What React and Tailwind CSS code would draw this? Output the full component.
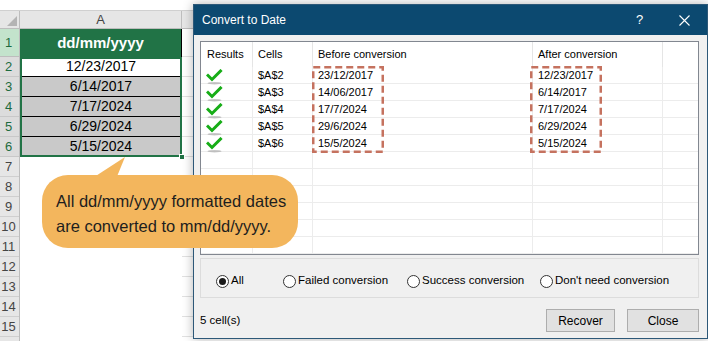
import clsx from "clsx";

const DATES = ["12/23/2017", "6/14/2017", "7/17/2024", "6/29/2024", "5/15/2024"];

const RESULTS = [
  { cell: "$A$2", before: "23/12/2017", after: "12/23/2017" },
  { cell: "$A$3", before: "14/06/2017", after: "6/14/2017" },
  { cell: "$A$4", before: "17/7/2024", after: "7/17/2024" },
  { cell: "$A$5", before: "29/6/2024", after: "6/29/2024" },
  { cell: "$A$6", before: "15/5/2024", after: "5/15/2024" },
];

// Row 16 only peeks in at the very bottom edge, so it gets no label.
const EMPTY_SHEET_ROWS = [7, 8, 9, 10, 11, 12, 13, 14, 15, 16];

const CheckMark = () => (
  <svg width="17" height="16" viewBox="0 0 17 16" className="shrink-0">
    <ellipse cx="8.5" cy="14.2" rx="7" ry="1.3" fill="#9a9a9a" opacity="0.55" />
    <polyline
      points="2,6.5 6,10.5 14.5,2"
      fill="none"
      stroke="#17ad17"
      strokeWidth="3"
      strokeLinecap="square"
    />
  </svg>
);

const CornerTriangle = () => (
  <svg width="10" height="10" viewBox="0 0 10 10" className="absolute bottom-[2px] right-[2px]">
    <polygon points="10,0 10,10 0,10" fill="#b4b4b4" />
  </svg>
);

const Sheet = () => (
  <div className="flex h-full flex-col bg-white font-['Liberation_Sans',Arial,sans-serif]">
    <div className="h-[11px] shrink-0 border-b border-[#d0d0d0] bg-white" />
    <div className="flex flex-1">
      {/* row numbers */}
      <div className="flex w-[20px] shrink-0 flex-col border-r border-[#bdbdbd] bg-[#e6e6e6] text-[13px]">
        <div className="relative h-[18px] border-b border-[#bdbdbd]">
          <CornerTriangle />
        </div>
        <div className="flex h-[28px] items-center justify-center border-b border-[#bdbdbd] bg-[#c3e3cc] pr-[2px] text-[#1d6b40]">
          1
        </div>
        {[2, 3, 4, 5, 6].map((n) => (
          <div
            key={n}
            className="flex h-[20px] items-center justify-center border-b border-[#c8c8c8] bg-[#dcdcdc] pr-[2px] text-[#1d6b40]"
          >
            {n}
          </div>
        ))}
        {EMPTY_SHEET_ROWS.map((n) => (
          <div
            key={n}
            className="flex h-[20px] items-center justify-center border-b border-[#cfcfcf] pr-[2px] text-[#444]"
          >
            {n < 16 ? n : null}
          </div>
        ))}
      </div>

      {/* column A */}
      <div className="flex w-[162px] shrink-0 flex-col">
        <div className="flex h-[18px] items-center justify-center border-b border-r border-[#bdbdbd] bg-[#e6e6e6] text-[13px] text-[#444]">
          A
        </div>
        <div className="flex h-[28px] items-center justify-center border-r border-black bg-[#217346] text-[15px] font-bold text-white">
          dd/mm/yyyy
        </div>
        <div className="relative">
          {DATES.map((d, i) => (
            <div
              key={d}
              className={clsx(
                "flex h-[20px] items-center justify-center border-b border-black text-[14px] text-black",
                i === 0 ? "bg-white" : "bg-[#c9c9c9]"
              )}
            >
              {d}
            </div>
          ))}
          {/* selection outline with fill handle */}
          <div className="pointer-events-none absolute inset-0 border-2 border-[#217346]" />
          <div className="absolute -bottom-[3px] -right-[3px] h-[6px] w-[6px] border border-white bg-[#217346]" />
        </div>
        {EMPTY_SHEET_ROWS.map((n) => (
          <div key={n} className="h-[20px]" />
        ))}
      </div>

      {/* column B, mostly under the dialog */}
      <div className="flex flex-1 flex-col">
        <div className="h-[18px] border-b border-[#bdbdbd] bg-[#e6e6e6]" />
        <div className="h-[28px] border-b border-[#e1e1e1]" />
        {[2, 3, 4, 5, 6, ...EMPTY_SHEET_ROWS].map((n) => (
          <div key={n} className="h-[20px] border-b border-[#e1e1e1]" />
        ))}
      </div>
    </div>
  </div>
);

const DashedBox = ({ className }) => (
  <svg width="72" height="87" viewBox="0 0 72 87" className={clsx("absolute", className)}>
    <rect
      x="1.25"
      y="1.25"
      width="69.5"
      height="84.5"
      fill="none"
      stroke="#c5725f"
      strokeWidth="2.5"
      strokeDasharray="7 4"
    />
  </svg>
);

const ListView = () => (
  <div className="relative mt-[6px] h-[214px] border border-[#828790] bg-white text-[11px] text-black">
    <div className="flex h-[25px]">
      <div className="flex w-[52px] items-center border-r border-[#e5e5e5] pl-[6px]">Results</div>
      <div className="flex w-[60px] items-center border-r border-[#e5e5e5] pl-[5px]">Cells</div>
      <div className="flex w-[220px] items-center border-r border-[#e5e5e5] pl-[5px]">Before conversion</div>
      <div className="flex w-[130px] items-center border-r border-[#e5e5e5] pl-[5px]">After conversion</div>
      <div className="flex-1" />
    </div>
    {RESULTS.map((r) => (
      <div key={r.cell} className="flex h-[17px]">
        <div className="flex w-[52px] items-center border-b border-r border-[#ececec] pl-[5px] pt-[3px]">
          <CheckMark />
        </div>
        <div className="flex w-[60px] items-center border-b border-r border-[#ececec] pl-[5px]">{r.cell}</div>
        <div className="flex w-[220px] items-center border-b border-r border-[#ececec] pl-[5px]">{r.before}</div>
        <div className="flex w-[130px] items-center border-b border-r border-[#ececec] pl-[5px]">{r.after}</div>
        <div className="flex-1 border-b border-[#ececec]" />
      </div>
    ))}
    {[0, 1, 2, 3, 4, 5].map((i) => (
      <div key={i} className="flex h-[17px]">
        <div className="w-[52px] border-b border-r border-[#ececec]" />
        <div className="w-[60px] border-b border-r border-[#ececec]" />
        <div className="w-[220px] border-b border-r border-[#ececec]" />
        <div className="w-[130px] border-b border-r border-[#ececec]" />
        <div className="flex-1 border-b border-[#ececec]" />
      </div>
    ))}
    <DashedBox className="left-[111px] top-[24px]" />
    <DashedBox className="left-[329px] top-[24px]" />
  </div>
);

const Radio = ({ checked, label, className }) => (
  <div className={clsx("flex items-center", className)}>
    <span className="flex h-[13px] w-[13px] items-center justify-center rounded-full border border-[#333] bg-white">
      {checked && <span className="h-[7px] w-[7px] rounded-full bg-[#1a1a1a]" />}
    </span>
    <span className="ml-[2px]">{label}</span>
  </div>
);

const Dialog = () => (
  <div className="absolute left-[193px] top-[4px] flex h-[335px] w-[515px] flex-col border border-[#2d5878] bg-[#f0f0f0] font-['Liberation_Sans',Arial,sans-serif] shadow-[0_0_10px_rgba(0,0,0,0.3)]">
    <div className="flex h-[30px] shrink-0 items-center bg-[#0c4970] pl-[8px] text-[12px] text-white">
      <span>Convert to Date</span>
      <span className="ml-auto flex w-[45px] justify-center text-[13px]">?</span>
      <span className="flex w-[45px] justify-center">
        <svg width="11" height="11" viewBox="0 0 11 11">
          <path d="M0.5 0.5 L10.5 10.5 M10.5 0.5 L0.5 10.5" stroke="white" strokeWidth="1.1" />
        </svg>
      </span>
    </div>

    <div className="flex flex-1 flex-col pl-[6px] pr-[8px] text-[11.5px] text-black">
      <ListView />

      <div className="mt-[3px] flex h-[40px] items-center border border-[#dcdcdc] pl-[15px] pt-[6px]">
        <Radio checked label="All" className="w-[67px]" />
        <Radio label="Failed conversion" className="w-[124px]" />
        <Radio label="Success conversion" className="w-[133px]" />
        <Radio label="Don't need conversion" />
      </div>

      <div className="mt-[11px] flex h-[23px] items-center">
        <span>5 cell(s)</span>
        <button className="ml-auto h-[23px] w-[69px] border border-[#adadad] bg-[#e1e1e1] text-[12px]">
          Recover
        </button>
        <button className="ml-[12px] h-[23px] w-[72px] border border-[#adadad] bg-[#e1e1e1] text-[12px]">
          Close
        </button>
      </div>
    </div>
  </div>
);

// The orange speech bubble sits on top of both the sheet and the dialog.
const Callout = () => (
  <>
    <svg width="32" height="20" viewBox="0 0 32 20" className="absolute left-[94px] top-[157px]">
      <polygon points="1,19.5 23,19.5 31,0" fill="#f3b65d" />
    </svg>
    <div className="absolute left-[42px] top-[175px] h-[73px] w-[256px] rounded-[26px] bg-[#f3b65d] pl-[14px] pt-[14px] font-['Liberation_Sans',Arial,sans-serif] text-[16.5px] leading-[25px] text-[#1e1e1e]">
      <div>All dd/mm/yyyy formatted dates</div>
      <div>are converted to mm/dd/yyyy.</div>
    </div>
  </>
);

export default function App() {
  return (
    <div className="relative h-[341px] w-[708px] overflow-hidden bg-white">
      <Sheet />
      <Dialog />
      <Callout />
    </div>
  );
}
